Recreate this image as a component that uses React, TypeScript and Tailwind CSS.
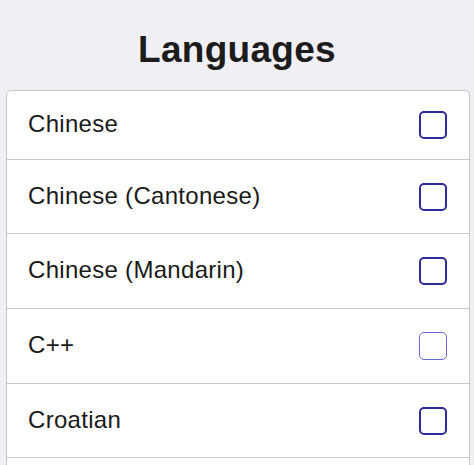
const languages = [
  { name: 'Chinese', h: 'h-[69px]', faint: false },
  { name: 'Chinese (Cantonese)', h: 'h-[74px]', faint: false },
  { name: 'Chinese (Mandarin)', h: 'h-[75px]', faint: false },
  { name: 'C++', h: 'h-[75px]', faint: true },
  { name: 'Croatian', h: 'h-[74px]', faint: false },
];

const Checkbox = ({ faint }: { faint: boolean }) => (
  <span
    className={`block w-[28px] h-[28px] rounded-[5px] bg-white ${
      faint ? 'border-[1.5px] border-[#6a6ad8]' : 'border-2 border-[#2b2b9c]'
    }`}
  />
);

const App = () => {
  return (
    <div
      className="w-[474px] h-[465px] overflow-hidden bg-[#efeff4]"
      style={{ fontFamily: '"Liberation Sans", Arial, sans-serif' }}
    >
      {/* Header */}
      <div className="h-[90px] pt-[31px] text-center">
        <h1 className="text-[37px] leading-none font-bold text-[#1c1c1c] tracking-[0.3px]">
          Languages
        </h1>
      </div>

      {/* List */}
      <div className="ml-[6px] w-[464px] bg-white border border-[#c6c6ca] rounded-t-[5px]">
        {languages.map((lang) => (
          <label
            key={lang.name}
            className={`flex items-center justify-between ${lang.h} pl-[21px] pr-[22px] border-b border-[#c8c8cc]`}
          >
            <span className="text-[24px] text-[#1a1a1a] tracking-[0.3px] -mt-[2px]">{lang.name}</span>
            <Checkbox faint={lang.faint} />
          </label>
        ))}
        {/* next row, scrolled out of view */}
        <div className="h-[40px]" />
      </div>
    </div>
  );
};

export default App;
